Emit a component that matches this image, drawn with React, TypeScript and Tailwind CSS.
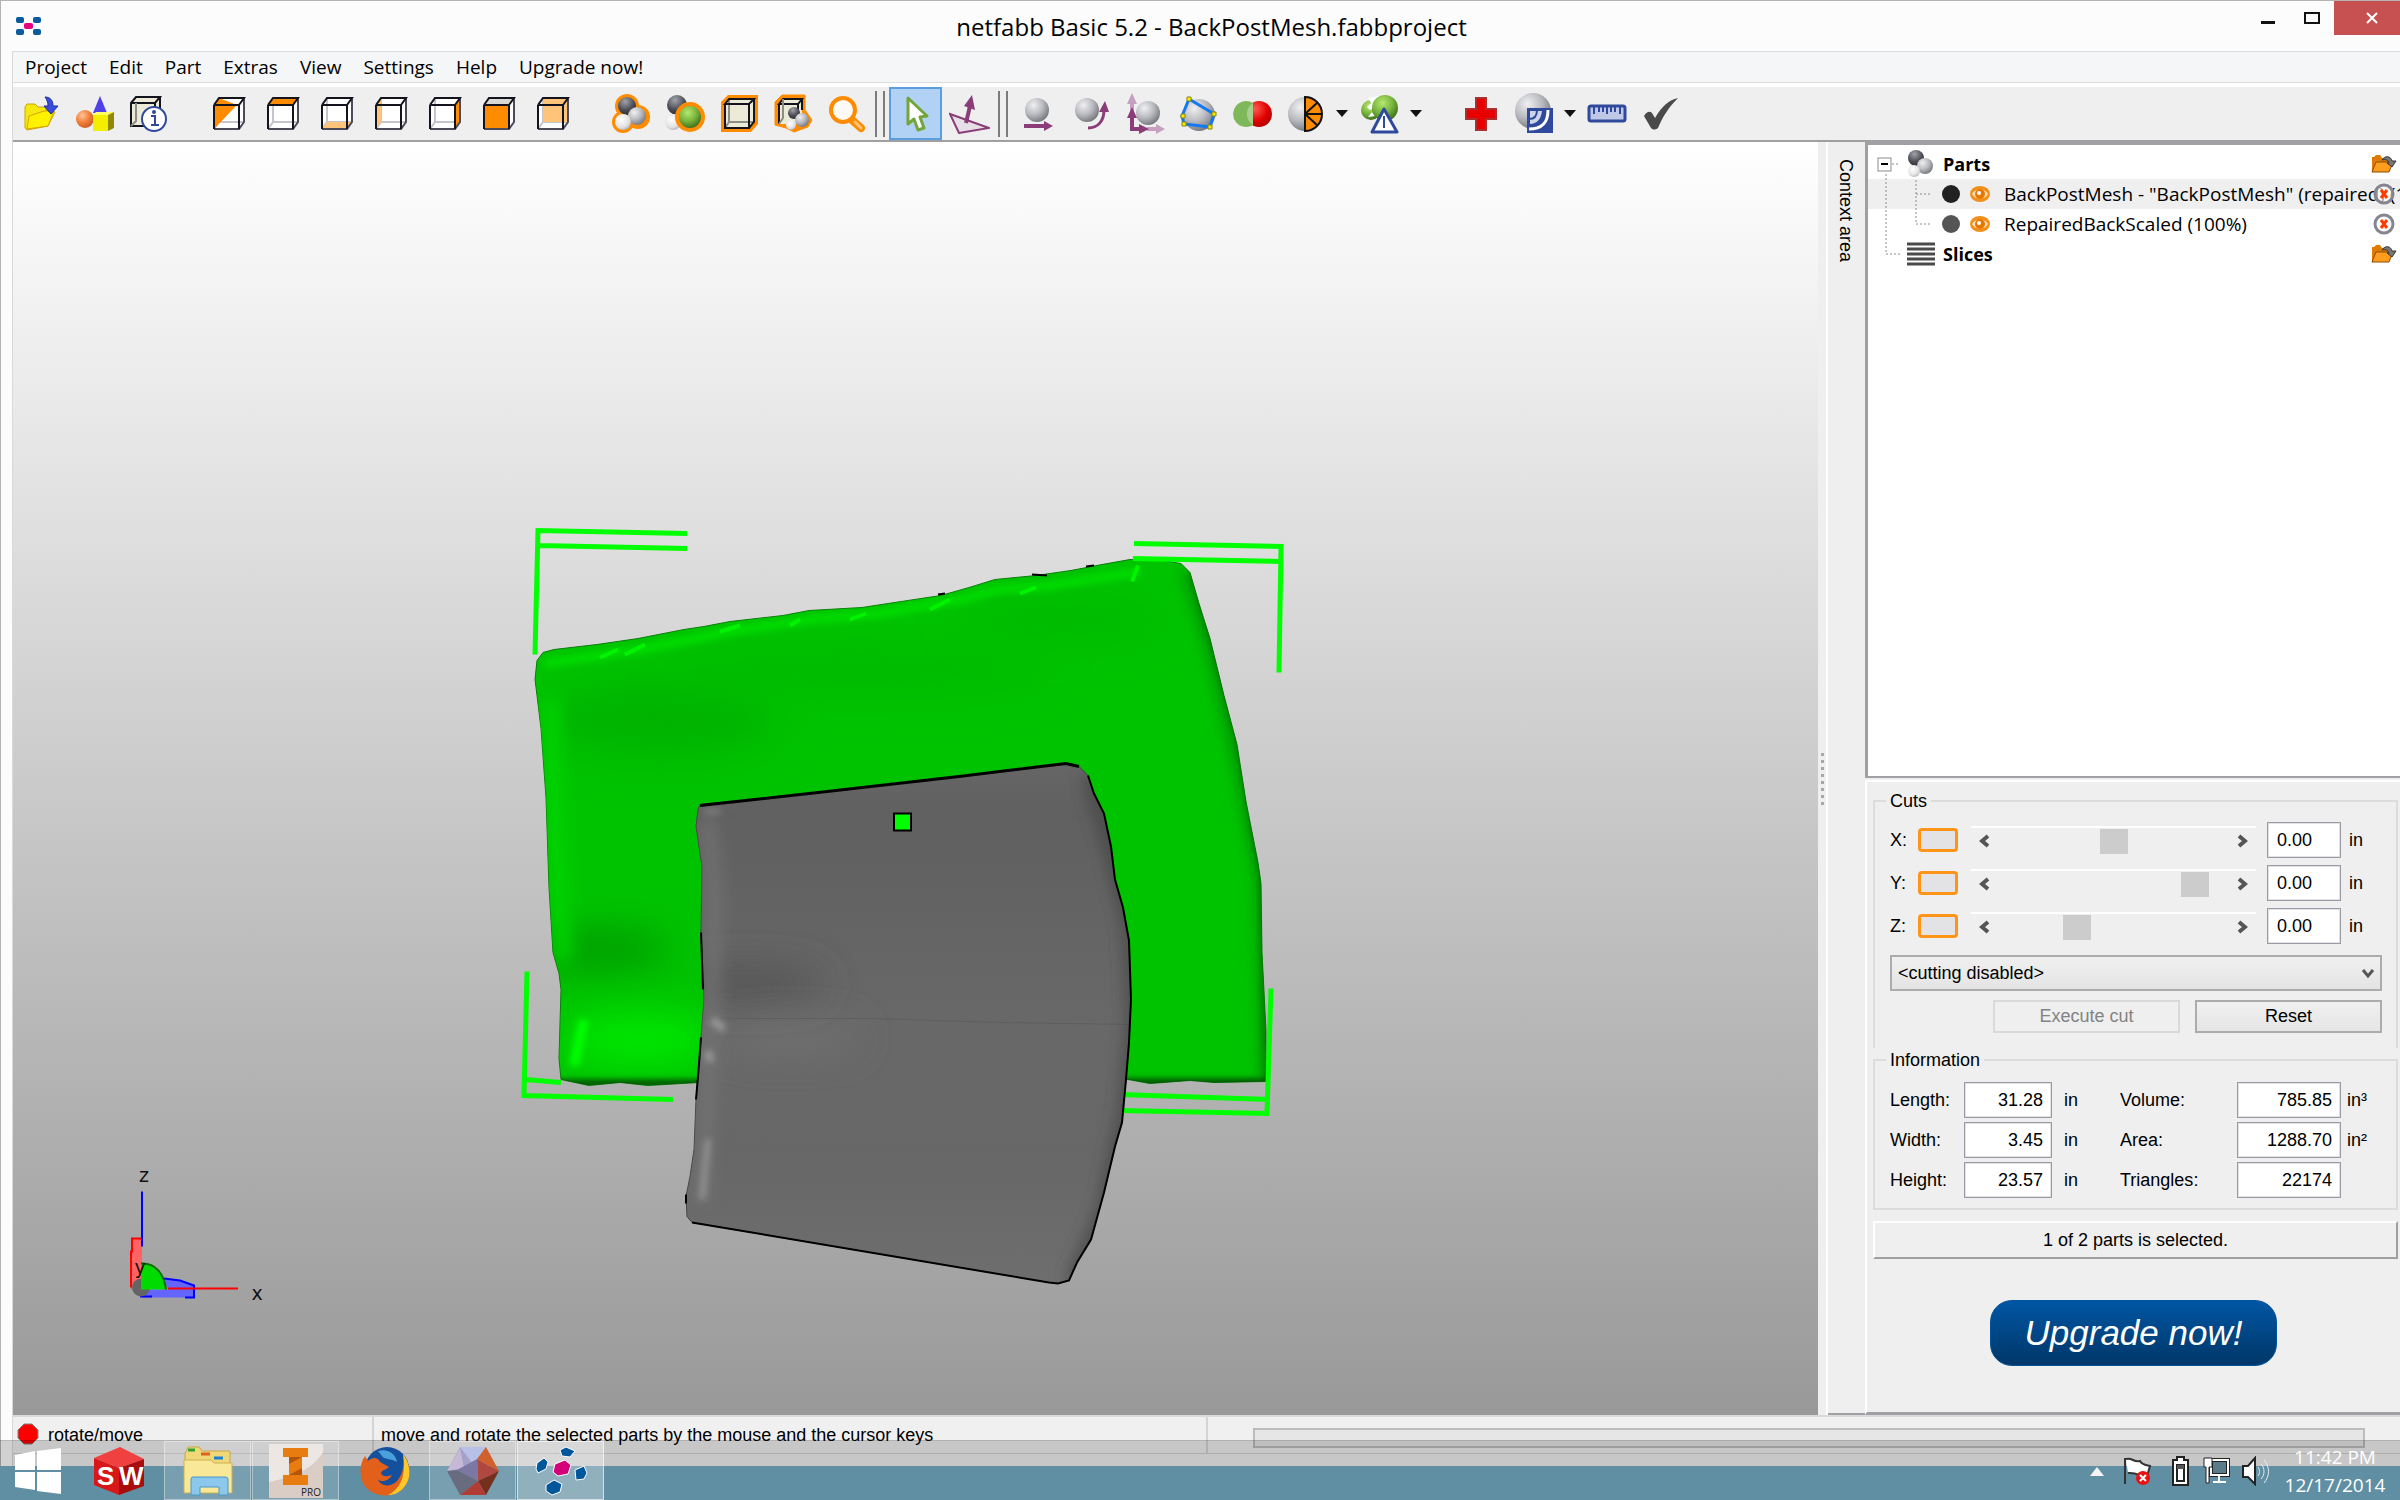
import React from 'react';

const menuItems = ['Project', 'Edit', 'Part', 'Extras', 'View', 'Settings', 'Help', 'Upgrade now!'];

const ORANGE = '#ff8c00';
const PURPLE = '#8a3d78';

/* Shared gradients for the ball icons */
const Gradients = () => (
  <svg className="absolute size-0" aria-hidden="true">
    <defs>
      <radialGradient id="ballGray" cx="0.35" cy="0.3" r="0.8">
        <stop offset="0" stopColor="#f0f0f2" />
        <stop offset="0.5" stopColor="#b9babf" />
        <stop offset="1" stopColor="#6a6b70" />
      </radialGradient>
      <radialGradient id="ballDark" cx="0.4" cy="0.25" r="0.8">
        <stop offset="0" stopColor="#a3a4aa" />
        <stop offset="0.6" stopColor="#4b4c55" />
        <stop offset="1" stopColor="#2a2a30" />
      </radialGradient>
      <radialGradient id="ballWhite" cx="0.4" cy="0.35" r="0.8">
        <stop offset="0" stopColor="#ffffff" />
        <stop offset="0.6" stopColor="#e2e2e4" />
        <stop offset="1" stopColor="#9a9aa0" />
      </radialGradient>
      <radialGradient id="ballGreen" cx="0.4" cy="0.3" r="0.8">
        <stop offset="0" stopColor="#b5e870" />
        <stop offset="0.5" stopColor="#78b43c" />
        <stop offset="1" stopColor="#2e5c14" />
      </radialGradient>
      <radialGradient id="ballOrange" cx="0.35" cy="0.3" r="0.8">
        <stop offset="0" stopColor="#ffc49a" />
        <stop offset="0.5" stopColor="#f27e3a" />
        <stop offset="1" stopColor="#c2561a" />
      </radialGradient>
      <radialGradient id="ballRed" cx="0.35" cy="0.3" r="0.8">
        <stop offset="0" stopColor="#ff5a50" />
        <stop offset="0.6" stopColor="#e00000" />
        <stop offset="1" stopColor="#a80000" />
      </radialGradient>
    </defs>
  </svg>
);

type IconProps = { w?: number; h?: number; children: React.ReactNode };

const Icon = ({ w = 40, h = 40, children }: IconProps) => (
  <svg width={w} height={h} viewBox={`0 0 ${w} ${h}`} aria-hidden="true" className="shrink-0">
    {children}
  </svg>
);

const cubeFaces: Record<string, React.ReactNode> = {
  iso: (
    <>
      <path d="M1 8H24L1 32Z" fill={ORANGE} />
      <path d="M6 1L24 8H1Z" fill={ORANGE} />
    </>
  ),
  top: <path d="M1 8L6 1H31L26 8Z" fill={ORANGE} />,
  bottom: <path d="M1 32L6 25H31L26 32Z" fill="#ffc37a" />,
  left: <path d="M1 8L6 1V25L1 32Z" fill="#ffc37a" />,
  right: <path d="M26 8L31 1V25L26 32Z" fill={ORANGE} />,
  front: <path d="M1 8H26V32H1Z" fill={ORANGE} />,
  back: <path d="M6 1H31V25H6Z" fill="#ffc37a" />,
};

const Cube = ({ face }: { face: string }) => (
  <Icon w={33} h={34}>
    <path d="M1 8L6 1H31V25L26 32H1Z" fill="#fff" />
    {face !== 'front' && <path d="M6 1V25H31M6 25L1 32" fill="none" stroke="#c4c4cc" strokeWidth="2" />}
    {cubeFaces[face]}
    {face === 'front' && <path d="M1 8L6 1H31L26 8Z" fill="#d9d8d4" />}
    <path d="M31 1V25L26 32H1" fill="none" stroke="#4a4a58" strokeWidth="2" />
    <path d="M1 8L6 1H31L26 8V32M1 8V32M1 8H26" fill="none" stroke="#14141e" strokeWidth="2" />
  </Icon>
);

const Caret = ({ label }: { label: string }) => (
  <button type="button" aria-label={label} className="flex h-full w-5 items-center justify-center">
    <Icon w={12} h={7}>
      <path d="M0 0H12L6 7Z" fill="#111" />
    </Icon>
  </button>
);

const ToolButton = ({ label, wide, children }: { label: string; wide?: boolean; children: React.ReactNode }) => (
  <button
    type="button"
    aria-label={label}
    className={`flex h-full shrink-0 items-center justify-center ${wide ? 'w-[54px]' : 'w-[53px]'}`}
  >
    {children}
  </button>
);

const Separator = () => (
  <div className="flex h-[46px] shrink-0 gap-[6px]">
    <div className="w-[2px] bg-[#7c7c7c]" />
    <div className="w-[2px] bg-[#7c7c7c]" />
  </div>
);

const ThreeBalls = ({ outline }: { outline?: boolean }) => (
  <>
    {outline && (
      <g fill={ORANGE}>
        <circle cx="15" cy="12" r="12" />
        <circle cx="26" cy="23" r="12" />
        <circle cx="11" cy="28" r="11" />
      </g>
    )}
    <circle cx="15" cy="12" r="9" fill="url(#ballDark)" />
    <circle cx="25" cy="22" r="9" fill="url(#ballGray)" />
    <circle cx="11" cy="28" r="8" fill="url(#ballWhite)" />
  </>
);

const Toolbar = () => (
  <div role="toolbar" className="flex h-[53px] items-center overflow-hidden bg-[#efefef]">
    <div className="ml-px flex h-full items-center">
      <ToolButton label="Open project" wide>
        <Icon w={35} h={36}>
          <path d="M1 11L3 8H11L14 11H22V14L31 16L24 30L3 34L1 32Z" fill="#f6e80c" stroke="#c9a700" />
          <path d="M3 33L5 20L20 15L30 15L24 30Z" fill="#fff200" stroke="#d9a400" />
          <path d="M21 1C26 1 29 4 29 10H34L27 18L20 10H24C24 6 23 4 21 1Z" fill="#3a4be0" stroke="#1e2c9c" />
        </Icon>
      </ToolButton>
      <ToolButton label="Add primitive" wide>
        <Icon w={39} h={38}>
          <path d="M24 1L31 18H17Z" fill="#5040e8" />
          <circle cx="9" cy="24" r="9" fill="url(#ballOrange)" />
          <path d="M17 20L20 17H38L33 20Z" fill="#ffff66" />
          <path d="M17 20H32V36H17Z" fill="#f4ee00" />
          <path d="M32 20L38 17V33L32 36Z" fill="#8f8a00" />
        </Icon>
      </ToolButton>
      <ToolButton label="Part information" wide>
        <Icon w={38} h={38}>
          <path d="M1 8L6 2H30V30H1Z" fill="#ecebd8" />
          <path d="M1 8L6 2H30L25 8ZM1 8V31H14M25 8V14M30 2V14" fill="none" stroke="#14141e" strokeWidth="2" />
          <path d="M6 8V26L1 31" fill="none" stroke="#8d8d86" strokeWidth="2" />
          <circle cx="24" cy="24" r="12" fill="#fff" stroke="#2f4a9c" strokeWidth="2" />
          <path d="M21 21H25V30M21 30H29" fill="none" stroke="#2f4a9c" strokeWidth="2" />
          <circle cx="24" cy="17" r="2" fill="#2f4a9c" />
        </Icon>
      </ToolButton>
    </div>

    <div className="ml-[26px] flex h-full items-center">
      {Object.keys(cubeFaces).map((face) => (
        <ToolButton key={face} label={`View ${face}`} wide>
          <Cube face={face} />
        </ToolButton>
      ))}
    </div>

    <div className="ml-6 flex h-full items-center">
      <ToolButton label="Zoom to all parts" wide>
        <Icon w={39} h={39}>
          <ThreeBalls outline />
        </Icon>
      </ToolButton>
      <ToolButton label="Zoom to selected part" wide>
        <Icon w={41} h={39}>
          <circle cx="12" cy="11" r="10" fill="url(#ballDark)" />
          <circle cx="8" cy="28" r="8" fill="url(#ballWhite)" />
          <circle cx="25" cy="23" r="15" fill={ORANGE} />
          <circle cx="25" cy="23" r="11" fill="url(#ballGreen)" />
        </Icon>
      </ToolButton>
      <ToolButton label="Zoom to platform" wide>
        <Icon w={39} h={39}>
          <path d="M1 8L8 1H38V30L31 38H1Z" fill={ORANGE} />
          <path d="M5 10L9 5H34V29L29 34H5Z" fill="#ecebd8" />
          <path d="M9 5V28H34M9 28L5 34" fill="none" stroke="#8d8d86" strokeWidth="2" />
          <path d="M5 10L9 5H34L29 10ZM5 10V34H29V10M29 34L34 28V5" fill="none" stroke="#14141e" strokeWidth="2" />
        </Icon>
      </ToolButton>
      <ToolButton label="Zoom to platform and parts" wide>
        <Icon w={39} h={39}>
          <path d="M1 8L8 1H31V16L38 26L34 33L20 38L12 34L1 31Z" fill={ORANGE} stroke={ORANGE} />
          <path d="M5 10L9 5H28V26L24 30H5Z" fill="#ecebd8" />
          <path d="M5 10L9 5H28L24 10ZM5 10V30M24 10V18M28 5V16" fill="none" stroke="#14141e" strokeWidth="2" />
          <path d="M9 5V24L5 30" fill="none" stroke="#8d8d86" strokeWidth="2" />
          <circle cx="20" cy="19" r="6" fill="url(#ballDark)" />
          <circle cx="28" cy="26" r="7" fill="url(#ballGray)" />
          <circle cx="17" cy="31" r="5" fill="url(#ballWhite)" />
        </Icon>
      </ToolButton>
      <ToolButton label="Zoom" wide>
        <Icon w={38} h={39}>
          <path d="M24 26L33 34" stroke={ORANGE} strokeWidth="8" strokeLinecap="round" />
          <path d="M27 28L33 34" stroke="#ffc37a" strokeWidth="3" strokeLinecap="round" />
          <circle cx="15" cy="16" r="12" fill="#fdfaf5" stroke={ORANGE} strokeWidth="4" />
        </Icon>
      </ToolButton>
    </div>

    <div className="mx-px">
      <Separator />
    </div>

    <div className="ml-[3px] flex h-full items-center">
      <button
        type="button"
        aria-label="Select parts"
        aria-pressed="true"
        className="flex h-full w-[53px] items-center justify-center border-2 border-[#5b9ee0] bg-[#b1d2f4] pl-[2px]"
      >
        <Icon w={24} h={38}>
          <path d="M3 3V29L9 24L13 35L19 33L15 22L22 21Z" fill="#fff" stroke="#74a53c" strokeWidth="3" strokeLinejoin="round" />
        </Icon>
      </button>
      <ToolButton label="Align to bottom plane" wide>
        <Icon w={41} h={40}>
          <path d="M1 20L40 34L10 39Z" fill="#e6dfe6" stroke={PURPLE} strokeWidth="2" />
          <path d="M17 29L21 12" stroke={PURPLE} strokeWidth="4" />
          <path d="M23 1L26 16L15 12Z" fill={PURPLE} />
        </Icon>
      </ToolButton>
    </div>

    <div className="ml-[2px]">
      <Separator />
    </div>

    <div className="ml-1 flex h-full items-center">
      <ToolButton label="Move part">
        <Icon w={29} h={34}>
          <circle cx="13" cy="13" r="12" fill="url(#ballGray)" />
          <path d="M0 29H22" stroke={PURPLE} strokeWidth="4" />
          <path d="M20 24L29 29L20 34Z" fill={PURPLE} />
        </Icon>
      </ToolButton>
      <ToolButton label="Rotate part" wide>
        <Icon w={34} h={34}>
          <circle cx="12" cy="13" r="12" fill="url(#ballGray)" />
          <path d="M13 31C23 31 29 24 29 13" fill="none" stroke={PURPLE} strokeWidth="3" />
          <path d="M24 15L30 4L34 15Z" fill={PURPLE} />
        </Icon>
      </ToolButton>
      <ToolButton label="Scale part">
        <Icon w={38} h={42}>
          <circle cx="21" cy="20" r="12" fill="url(#ballGray)" />
          <path d="M5 20V8M20 36H31" stroke="#c6a0c0" strokeWidth="4" />
          <path d="M0 11L5 0L10 11ZM29 31L38 36L29 41Z" fill="#c6a0c0" />
          <path d="M5 24V36H14" fill="none" stroke={PURPLE} strokeWidth="4" />
          <path d="M0 25L5 14L10 25ZM12 31L22 36L12 41Z" fill={PURPLE} />
        </Icon>
      </ToolButton>
      <ToolButton label="Free cut">
        <Icon w={37} h={38}>
          <circle cx="19" cy="20" r="16" fill="url(#ballGray)" />
          <path d="M9 4L34 19L30 32L4 29L2 21Z" fill="none" stroke="#1478f0" strokeWidth="3" />
          <g fill="#f6ee00" stroke="#8a8400">
            <path d="M7 2H11V6H7ZM32 17H36V21H32ZM28 30H32V34H28ZM2 27H6V31H2ZM1 19H5V23H1Z" />
          </g>
        </Icon>
      </ToolButton>
      <ToolButton label="Boolean operation" wide>
        <Icon w={39} h={28}>
          <circle cx="26" cy="14" r="13" fill="url(#ballRed)" />
          <path d="M20 3A13 13 0 1 0 20 25Z" fill="#7fb85a" />
          <path d="M20 3A13 13 0 0 0 20 25Z" fill="#a9cf90" />
        </Icon>
      </ToolButton>
      <ToolButton label="Triangle reduction">
        <Icon w={37} h={38}>
          <circle cx="18" cy="19" r="17" fill="url(#ballGray)" />
          <path d="M18 2A17 17 0 0 1 18 36Z" fill={ORANGE} />
          <path d="M18 2A17 17 0 0 1 18 36V2ZM18 19L31 7M18 19H35M18 19L31 31" fill="none" stroke="#111" strokeWidth="2" />
          <path d="M18 1V37" stroke="#111" strokeWidth="2" />
        </Icon>
      </ToolButton>
      <Caret label="More mesh tools" />
    </div>

    <div className="flex h-full items-center">
      <ToolButton label="Standard analysis" wide>
        <Icon w={39} h={40}>
          <circle cx="11" cy="16" r="10" fill="url(#ballGreen)" />
          <path d="M8 4L19 2L13 9L16 13L10 16L15 22L8 23L12 18L7 13L11 9Z" fill="#fff" />
          <circle cx="25" cy="14" r="13" fill="url(#ballGreen)" />
          <path d="M24 15L37 38H12Z" fill="#fff" stroke="#2f4a9c" strokeWidth="3" strokeLinejoin="round" />
          <path d="M24 22V34" stroke="#2f4a9c" strokeWidth="2" />
        </Icon>
      </ToolButton>
      <Caret label="More analysis tools" />
    </div>

    <div className="ml-7 flex h-full items-center">
      <ToolButton label="Repair part">
        <Icon w={34} h={36}>
          <path d="M12 2H22V13H32V23H22V34H12V23H2V13H12Z" fill="#e80000" stroke="#a83030" strokeWidth="2" />
        </Icon>
      </ToolButton>
      <ToolButton label="Slice part">
        <Icon w={40} h={41}>
          <circle cx="19" cy="18" r="18" fill="url(#ballGray)" />
          <path d="M13 15H39V40H13Z" fill="#2f4a9c" />
          <path d="M16 18H28C27 26 23 31 16 31Z" fill="#cdd4ec" />
          <path d="M34 17C34 30 28 36 15 36" fill="none" stroke="#fff" strokeWidth="3" />
          <path d="M23 17C23 24 20 26 15 26" fill="none" stroke="#2f4a9c" strokeWidth="2" />
        </Icon>
      </ToolButton>
      <Caret label="More slice tools" />
      <ToolButton label="Measure" wide>
        <Icon w={40} h={19}>
          <rect x="2" y="2" width="36" height="15" rx="2" fill="#bfc8e6" stroke="#2f4a9c" strokeWidth="3" />
          <path d="M7 3V10M12 3V8M16 3V8M20 3V10M24 3V8M28 3V8M33 3V10" stroke="#2f4a9c" strokeWidth="2" />
        </Icon>
      </ToolButton>
      <ToolButton label="Apply" wide>
        <Icon w={36} h={34}>
          <path d="M1 19C4 14 7 14 9 16L12 21C19 9 26 3 35 1C26 10 20 19 15 31C12 33 10 33 8 31Z" fill="#4a4a4a" />
        </Icon>
      </ToolButton>
    </div>
  </div>
);

const GREEN_PART =
  'M535 680L537 661L543 653L554 650L597 645L638 639L684 630L704 627L730 622L783 616L809 611L862 608L888 604L941 596L969 588L995 580L1036 576L1071 571L1102 565L1130 560L1163 561L1181 564L1190 573L1199 604L1210 639L1224 696L1237 745L1246 802L1258 863L1261 884L1262 953L1266 1031V1082L1214 1083L1190 1081L1150 1084L1128 1080L699 1083L648 1086L620 1083L589 1086L561 1080L559 1059L561 990L559 974L553 953L549 888L546 798L541 729L537 696Z';
const GRAY_EDGE =
  'M1088 776L1094 794L1104 814L1111 847L1115 880L1123 908L1129 941L1131 1000L1129 1043L1126 1080L1122 1123L1115 1147L1104 1193L1091 1240L1077 1263L1069 1281L1058 1284L1049 1283L692 1223';
const GRAY_PART = `${GRAY_EDGE}L687 1217L686 1197L690 1177L694 1150L696 1100L698 1077L701 1038L704 1000L701 933L702 867L696 827L698 810L700 805L827 792L959 777L1066 764L1079 767Z`;

const Viewport = () => (
  <div className="relative min-w-0 flex-1 bg-linear-to-b from-white to-[#999999]">
    <svg className="absolute inset-0 h-full w-full" viewBox="13 143 1805 1272" role="img" aria-label="3D view">
      <defs>
        <clipPath id="greenClip">
          <path d={GREEN_PART} />
        </clipPath>
        <clipPath id="grayClip">
          <path d={GRAY_PART} />
        </clipPath>
        <linearGradient id="grayFill" x1="0" y1="0" x2="0" y2="1">
          <stop offset="0" stopColor="#666666" />
          <stop offset="0.1" stopColor="#606060" />
          <stop offset="0.5" stopColor="#686868" />
          <stop offset="0.75" stopColor="#676767" />
          <stop offset="1" stopColor="#6e6e6e" />
        </linearGradient>
        <filter id="soft3" filterUnits="userSpaceOnUse" x="500" y="500" width="800" height="820">
          <feGaussianBlur stdDeviation="3" />
        </filter>
        <filter id="soft8" filterUnits="userSpaceOnUse" x="500" y="500" width="800" height="820">
          <feGaussianBlur stdDeviation="8" />
        </filter>
        <filter id="soft20" filterUnits="userSpaceOnUse" x="500" y="500" width="800" height="820">
          <feGaussianBlur stdDeviation="20" />
        </filter>
      </defs>

      {/* selected part */}
      <path d={GREEN_PART} fill="#00c300" stroke="#0a7c0a" strokeWidth="1" />
      <g clipPath="url(#greenClip)">
        <ellipse cx="660" cy="720" rx="120" ry="40" fill="#00b400" filter="url(#soft20)" />
        <ellipse cx="860" cy="670" rx="190" ry="26" fill="#00ba00" filter="url(#soft20)" />
        <ellipse cx="1060" cy="620" rx="100" ry="20" fill="#00b800" filter="url(#soft20)" />
        <ellipse cx="600" cy="950" rx="70" ry="18" fill="#009600" filter="url(#soft20)" />
        <ellipse cx="640" cy="1040" rx="80" ry="26" fill="#00e800" filter="url(#soft20)" />
        <path d="M550 700L554 800L560 900L564 960" fill="none" stroke="#00d400" strokeWidth="16" filter="url(#soft8)" />
        <path d="M545 664L640 650L730 632L810 620L880 614L960 600L1000 590L1050 586L1140 572" fill="none" stroke="#00dc00" strokeWidth="9" filter="url(#soft3)" />
        <path d="M600 658L618 650M625 655L645 645M720 632L740 626M790 626L800 620M850 620L866 614M930 610L950 600M1020 594L1036 588M1132 582L1138 566" stroke="#00f400" strokeWidth="4" />
        <path d="M584 1020L574 1066" stroke="#00ff00" strokeWidth="10" filter="url(#soft3)" />
        <path d="M1188 570L1212 645L1240 760L1263 880L1268 1082" fill="none" stroke="#008e00" strokeWidth="12" filter="url(#soft8)" />
        <path d="M1192 573L1212 640L1238 740L1262 880L1267 1082" fill="none" stroke="#006400" strokeWidth="4" filter="url(#soft3)" />
        <path d="M555 1084H710M1120 1083H1270" stroke="#004000" strokeWidth="7" filter="url(#soft3)" />
      </g>
      <path d="M1032 575L1047 576M938 595L945 594M1086 567L1094 566" stroke="#000" strokeWidth="2" />

      {/* bounding box corners */}
      <g fill="none" stroke="#00ff00" strokeWidth="5">
        <path d="M687 534L538 531L535 655M538 546L687 549" />
        <path d="M1134 544L1281 547L1279 673M1133 559L1281 562" />
        <path d="M527 972L524 1096L673 1100M525 1080L561 1083" />
        <path d="M1271 989L1267 1114L1120 1111M1120 1095L1270 1100" />
      </g>

      {/* unselected part */}
      <path d={GRAY_PART} fill="url(#grayFill)" stroke="#444" strokeWidth="1" />
      <g clipPath="url(#grayClip)">
        <ellipse cx="745" cy="985" rx="80" ry="14" fill="#505050" filter="url(#soft20)" />
        <ellipse cx="790" cy="1038" rx="70" ry="10" fill="#767676" filter="url(#soft20)" />
        <path d="M702 1019L870 1019L1000 1023L1131 1025" fill="none" stroke="#5e5e5e" strokeWidth="1" />
        <path d="M708 820L714 900L712 1000L708 1100L702 1200" fill="none" stroke="#757575" strokeWidth="12" filter="url(#soft8)" />
        <path d="M704 812L720 812" stroke="#7c7c7c" strokeWidth="6" filter="url(#soft3)" />
        <path d="M712 1020L724 1030M707 1052L711 1062" stroke="#989898" strokeWidth="8" filter="url(#soft3)" />
        <path d="M708 1140L702 1200" stroke="#929292" strokeWidth="6" filter="url(#soft3)" />
        <path d="M1088 776L1108 840L1130 930L1134 1020L1126 1110L1104 1210L1072 1284" fill="none" stroke="#444444" strokeWidth="12" filter="url(#soft8)" />
      </g>
      <path d="M700 806L827 792L959 777L1066 764L1079 767" fill="none" stroke="#000" strokeWidth="3" />
      <path d={GRAY_EDGE} fill="none" stroke="#000" strokeWidth="2" />
      <path d="M701 933L703 990M701 1038L698 1077L696 1100M686 1195V1204" fill="none" stroke="#000" strokeWidth="2" />
      <rect x="894" y="814" width="17" height="17" fill="#00ff00" stroke="#000" strokeWidth="2" />

      {/* orientation axes */}
      <path d="M132 1239H142V1290H131V1252H132Z" fill="#ff6464" />
      <path d="M142 1239H132V1252H131V1288" fill="none" stroke="#ff0000" strokeWidth="2" />
      <path d="M164 1279L180 1281L194 1286V1298H142V1290H168Z" fill="#6464ff" />
      <path d="M164 1279L180 1281L194 1286V1298H185M140 1297H152" fill="none" stroke="#0000ff" strokeWidth="2" />
      <circle cx="141" cy="1288" r="9" fill="#646464" />
      <path d="M141 1264C155 1263 164 1274 166 1290H141Z" fill="#00dc00" />
      <path d="M141 1264C155 1263 164 1274 166 1290" fill="none" stroke="#006e00" strokeWidth="2" />
      <path d="M142 1192V1247" stroke="#0000ff" strokeWidth="2" />
      <path d="M168 1289H238" stroke="#ff0000" strokeWidth="2" />
      <g fontFamily="'DejaVu Sans', sans-serif" fontSize="19" textAnchor="middle" fill="#111">
        <text x="144" y="1182">z</text>
        <text x="257" y="1300">x</text>
        <text x="140" y="1274">y</text>
      </g>
    </svg>
  </div>
);

const FolderIcon = () => (
  <Icon w={26} h={20}>
    <path d="M1 18V3H3L5 1H9L11 4H17V18Z" fill="#e07b00" />
    <path d="M5 8H22L18 18H1Z" fill="#ff9d1e" stroke="#8a4b00" />
    <path d="M11 6C14 1 20 2 21 7H25L21 13L16 9H18C17 6 15 5 11 6Z" fill="#777" stroke="#333" />
  </Icon>
);

const RemoveIcon = () => (
  <Icon w={22} h={22}>
    <circle cx="11" cy="11" r="9" fill="#fff" fillOpacity="0.6" stroke="#85858f" strokeWidth="3" />
    <path d="M8 7L14 15M14 7L8 15" stroke="#ff3c00" strokeWidth="3" />
  </Icon>
);

const EyeIcon = () => (
  <Icon w={21} h={18}>
    <ellipse cx="10" cy="9" rx="10" ry="8" fill="#f0901c" />
    <path d="M2 9C5 3 15 3 18 9C15 15 5 15 2 9Z" fill="#fbe0bc" />
    <circle cx="10" cy="9" r="5" fill="#e67800" />
    <circle cx="9" cy="8" r="2" fill="#fff" />
  </Icon>
);

type TreeLeafProps = { color: string; name: string; selected?: boolean };

const TreeLeaf = ({ color, name, selected }: TreeLeafProps) => (
  <li className={`flex h-[30px] items-center pl-[73px] ${selected ? 'bg-[#efefef]' : ''}`}>
    <Icon w={20} h={20}>
      <circle cx="10" cy="10" r="9" fill={color} />
    </Icon>
    <button type="button" aria-label={`Toggle ${name}`} className="ml-[9px]">
      <EyeIcon />
    </button>
    <span className="ml-[13px] w-0 flex-1 whitespace-nowrap">{name}</span>
    <button type="button" aria-label={`Remove ${name}`} className="relative mr-[5px]">
      <RemoveIcon />
    </button>
  </li>
);

const PartsTree = () => (
  <div className="relative min-h-0 flex-1 overflow-hidden border-t-[3px] border-b-2 border-l-[3px] border-[#a0a0a4] bg-white pt-1 font-['Open_Sans','Noto_Sans',sans-serif] text-[19px]">
    <ul>
      <li className="flex h-[30px] items-center pr-[3px] pl-[9px] font-bold">
        <button type="button" aria-label="Collapse Parts">
          <Icon w={15} h={15}>
            <rect x="1" y="1" width="13" height="13" fill="#fff" stroke="#8c8c8c" strokeWidth="1" />
            <path d="M4 7H11" stroke="#000" strokeWidth="2" />
          </Icon>
        </button>
        <span className="ml-[15px]">
          <Icon w={28} h={28}>
            <circle cx="9" cy="8" r="8" fill="url(#ballDark)" />
            <circle cx="18" cy="16" r="8" fill="url(#ballGray)" />
            <circle cx="7" cy="21" r="6" fill="url(#ballWhite)" />
          </Icon>
        </span>
        <span className="ml-2 flex-1 text-[18px]">Parts</span>
        <button type="button" aria-label="Open part">
          <FolderIcon />
        </button>
      </li>
      <TreeLeaf color="#222222" name={'BackPostMesh - "BackPostMesh" (repaired) (1'} selected />
      <TreeLeaf color="#555555" name="RepairedBackScaled (100%)" />
      <li className="flex h-[30px] items-center pr-[3px] pl-[39px] font-bold">
        <Icon w={28} h={24}>
          <path d="M0 2H28M0 7H28M0 12H28M0 17H28M0 22H28" stroke="#4a4a4a" strokeWidth="3" />
        </Icon>
        <span className="ml-2 flex-1 text-[18px]">Slices</span>
        <button type="button" aria-label="Open slices">
          <FolderIcon />
        </button>
      </li>
    </ul>
    {/* connector lines */}
    <svg className="pointer-events-none absolute top-0 left-0" width="64" height="120" aria-hidden="true">
      <path d="M18 29V109H32M24 19H32M48 35V79H62M48 49H62" fill="none" stroke="#8c8c8c" strokeWidth="1" strokeDasharray="2 2" />
    </svg>
  </div>
);

const Chevron = ({ d }: { d: string }) => (
  <Icon w={12} h={14}>
    <path d={d} fill="none" stroke="#555" strokeWidth="4" />
  </Icon>
);

const CutRow = ({ axis, value }: { axis: string; value: number }) => (
  <div className="flex h-9 items-center">
    <label htmlFor={`cut-${axis}`} className="w-7">
      {axis}:
    </label>
    <button
      type="button"
      aria-label={`Show ${axis} cut`}
      className="h-6 w-10 shrink-0 rounded-[4px] border-[3px] border-[#ff9518] bg-[#e3e3e6]"
    />
    <div className="ml-[13px] flex h-[28px] min-w-0 flex-1 items-center justify-between border-t-2 border-white px-2">
      <button type="button" aria-label={`Decrease ${axis}`}>
        <Chevron d="M9 2L3 7L9 12" />
      </button>
      <input
        type="range"
        aria-label={`${axis} position`}
        min={0}
        max={100}
        defaultValue={value}
        className="mx-[7px] h-[25px] min-w-0 flex-1 appearance-none bg-transparent [&::-webkit-slider-thumb]:h-[25px] [&::-webkit-slider-thumb]:w-[28px] [&::-webkit-slider-thumb]:appearance-none [&::-webkit-slider-thumb]:bg-[#cccccc]"
      />
      <button type="button" aria-label={`Increase ${axis}`}>
        <Chevron d="M3 2L9 7L3 12" />
      </button>
    </div>
    <input
      id={`cut-${axis}`}
      type="text"
      defaultValue="0.00"
      className="ml-[11px] h-9 w-[74px] border border-[#9a9aa2] bg-white px-[9px] shadow-[inset_0_0_0_1px_#e2e2e6]"
    />
    <span className="w-[41px] pl-2">in</span>
  </div>
);

const Field = ({ id, label, value, unit, wide }: { id: string; label: string; value: string; unit: React.ReactNode; wide?: boolean }) => (
  <div className="flex h-9 items-center">
    <label htmlFor={id} className={wide ? 'w-[117px]' : 'w-[74px]'}>
      {label}:
    </label>
    <input
      id={id}
      type="text"
      readOnly
      value={value}
      className={`h-9 border border-[#9a9aa2] bg-white px-2 text-right shadow-[inset_0_0_0_1px_#e2e2e6] ${wide ? 'w-[104px]' : 'w-[88px]'}`}
    />
    <span className={wide ? 'pl-[6px]' : 'pl-3'}>{unit}</span>
  </div>
);

const legendClass = '-ml-1 px-1 leading-[22px]';

const ControlPanel = () => (
  <div className="mt-[2px] flex flex-col border-t-2 border-b-[3px] border-l-2 border-t-white border-b-[#a0a0a4] border-l-white pr-[2px] pb-[46px] pl-[6px] pt-2 text-[18px]">
    <fieldset className="border-2 border-b-0 border-[#dcdcdc] pr-[14px] pb-[15px] pl-[15px]">
      <legend className={legendClass}>Cuts</legend>
      <div className="flex flex-col gap-[7px] pt-[10px]">
        <CutRow axis="X" value={50} />
        <CutRow axis="Y" value={90} />
        <CutRow axis="Z" value={32} />
      </div>
      <div className="relative mt-[11px]">
        <select
          aria-label="Cutting mode"
          className="h-9 w-full appearance-none border-2 border-[#acacac] bg-linear-to-b from-[#f0f0f0] to-[#e4e4e4] px-[6px]"
        >
          <option>&lt;cutting disabled&gt;</option>
        </select>
        <span className="pointer-events-none absolute top-[13px] right-[7px]">
          <Icon w={14} h={12}>
            <path d="M2 2L7 8L12 2" fill="none" stroke="#555" strokeWidth="3" />
          </Icon>
        </span>
      </div>
      <div className="mt-[9px] flex justify-end gap-[15px]">
        <button type="button" disabled className="h-[33px] w-[187px] border-2 border-[#d9d9d9] text-[#838383]">
          Execute cut
        </button>
        <button type="button" className="h-[33px] w-[187px] border-2 border-[#acacac] bg-linear-to-b from-[#f0f0f0] to-[#e5e5e5]">
          Reset
        </button>
      </div>
    </fieldset>

    <fieldset className="mt-px border-2 border-[#dcdcdc] pr-[14px] pb-[10px] pl-[15px]">
      <legend className={legendClass}>Information</legend>
      <div className="grid grid-cols-[230px_1fr] gap-y-1 pt-[11px]">
        <Field id="length" label="Length" value="31.28" unit="in" />
        <Field id="volume" label="Volume" value="785.85" unit="in³" wide />
        <Field id="width" label="Width" value="3.45" unit="in" />
        <Field id="area" label="Area" value="1288.70" unit="in²" wide />
        <Field id="height" label="Height" value="23.57" unit="in" />
        <Field id="triangles" label="Triangles" value="22174" unit="" wide />
      </div>
    </fieldset>

    <p className="mt-[11px] flex h-[38px] items-center justify-center border-2 border-t-white border-r-[#a0a0a0] border-b-[#a0a0a0] border-l-white">
      1 of 2 parts is selected.
    </p>
    <button
      type="button"
      className="mt-[41px] mr-1 h-[66px] w-[287px] self-center rounded-[22px] border border-[#00549c] bg-linear-to-b from-[#0056a4] to-[#003768] font-['Liberation_Sans',Arial,sans-serif] text-[35px] text-white italic"
    >
      Upgrade now!
    </button>
  </div>
);

const StatusBar = () => (
  <footer className="flex h-[38px] shrink-0 border-t-2 border-[#dadada] bg-[#f0f0f0] text-[18px]">
    <div className="flex w-[361px] items-start border-r-2 border-[#d4d4d4] pt-[6px]">
      <span className="ml-1">
        <Icon w={22} h={22}>
          <path d="M7 1H15L21 7V15L15 21H7L1 15V7Z" fill="#ff0000" stroke="#808080" />
        </Icon>
      </span>
      <span className="ml-[9px] leading-6">rotate/move</span>
    </div>
    <div className="w-[834px] border-r-2 border-[#d4d4d4] pt-[6px] pl-[7px] leading-6">
      move and rotate the selected parts by the mouse and the cursor keys
    </div>
    <div className="flex-1 pt-[11px] pr-[35px] pl-[45px]">
      <div role="progressbar" aria-label="Progress" className="h-5 border-2 border-[#bcbcbc] bg-[#e6e6e6]" />
    </div>
  </footer>
);

const taskButton = 'flex h-[59px] w-[87px] items-center justify-center';

const Taskbar = () => (
  <nav className="absolute inset-x-0 bottom-0 flex h-[60px] items-start border-t border-black/10 bg-black/17">
    <button type="button" aria-label="Start" className="flex h-[59px] w-[75px] items-center justify-center">
      <Icon w={46} h={48}>
        <path d="M0 8L20 4V23H0ZM22 4L46 1V23H22ZM0 25H20V43L0 40ZM22 25H46V47L22 44Z" fill="#fff" />
      </Icon>
    </button>
    <button type="button" aria-label="SolidWorks" className={taskButton}>
      <Icon w={52} h={50}>
        <path d="M1 12L27 1L51 13L26 22Z" fill="#f04040" />
        <path d="M1 12L26 22V49L1 39Z" fill="#d81818" />
        <path d="M26 22L51 13V40L26 49Z" fill="#a80c0c" />
        <g fontFamily="'Liberation Sans', Arial, sans-serif" fontWeight="bold" fontSize="26" fill="#fff">
          <text x="4" y="39">S</text>
          <text x="26" y="39">W</text>
        </g>
      </Icon>
    </button>
    <button type="button" aria-label="File Explorer" className={`${taskButton} ml-[2px] border border-white/40 bg-white/15`}>
      <Icon w={50} h={52}>
        <path d="M2 9L5 2H16L19 6H47V30H2Z" fill="#f0d878" stroke="#c8a848" />
        <path d="M5 5H12" stroke="#30a030" strokeWidth="3" />
        <path d="M18 9H27" stroke="#e06020" strokeWidth="3" />
        <path d="M31 13H40" stroke="#2080d0" strokeWidth="3" />
        <path d="M1 15H28L31 18H49V48H1Z" fill="#f8e898" stroke="#d0b050" />
        <path d="M8 50V34Q8 32 10 32H42Q45 32 45 34V50H36V42H17V50Z" fill="#8cc8ec" stroke="#4a98c8" />
      </Icon>
    </button>
    <button type="button" aria-label="Inventor Pro" className={`${taskButton} ml-px border border-white/40 bg-white/15`}>
      <Icon w={54} h={54}>
        <rect width="54" height="54" fill="#ece7e3" />
        <path d="M0 38C20 34 44 26 54 8V54H0Z" fill="#d9cdc6" />
        <path d="M14 4H39V13H33V31H39V41H14V31H20V13H14Z" fill="#e87c10" />
        <path d="M20 13H33L20 20ZM20 31H33V24Z" fill="#b4560a" />
        <text x="52" y="52" textAnchor="end" fontFamily="'Open Sans', sans-serif" fontSize="10" fill="#222">
          PRO
        </text>
      </Icon>
    </button>
    <button type="button" aria-label="Firefox" className={`${taskButton} ml-[2px]`}>
      <Icon w={50} h={50}>
        <circle cx="27" cy="23" r="22" fill="#14509c" />
        <path d="M18 5C28 2 36 8 37 16C31 12 24 14 22 10Z" fill="#4aa0dc" />
        <path d="M43 8C52 20 52 36 40 45C28 53 10 50 3 37C-1 28 0 17 5 10L8 15C12 11 18 11 20 16L29 21C26 24 22 24 21 27C23 32 28 30 32 29C27 38 16 36 17 30C18 40 29 42 36 36C43 29 45 18 43 8Z" fill="#e2601a" />
        <path d="M43 8C52 20 52 36 40 45C36 48 32 49 28 49C42 42 46 28 43 8Z" fill="#fcc82c" />
      </Icon>
    </button>
    <button type="button" aria-label="Mesh viewer" className={`${taskButton} ml-px border border-white/40 bg-white/15`}>
      <Icon w={54} h={50}>
        <path d="M14 1L40 1L31 23Z" fill="#b8c0e8" />
        <path d="M14 1L31 23L1 25Z" fill="#a4a0c8" />
        <path d="M1 25L18 22L14 2Z" fill="#c8b8d8" />
        <path d="M40 1L53 25L31 13Z" fill="#d0602c" />
        <path d="M31 13L53 25L32 35Z" fill="#b04840" />
        <path d="M31 13L32 35L11 24Z" fill="#7c78a4" />
        <path d="M1 25L11 24L32 35L14 49Z" fill="#686c80" />
        <path d="M32 35L53 25L40 49Z" fill="#74301c" />
        <path d="M14 49L32 35L40 49Z" fill="#b03c34" />
      </Icon>
    </button>
    <button type="button" aria-label="netfabb Basic" className={`${taskButton} ml-px border border-white/60 bg-white/30`}>
      <Icon w={54} h={50}>
        <g stroke="#fff" strokeWidth="1">
          <path d="M26 4L32 1L41 5L36 11L28 10Z" fill="#00579c" />
          <path d="M3 17L10 12L14 16L12 23L4 27L2 23Z" fill="#00579c" />
          <path d="M21 18L31 14L37 19L34 28L24 30L19 26Z" fill="#d4007a" />
          <path d="M41 24L50 20L53 27L50 33L42 34Z" fill="#00579c" />
          <path d="M12 39L20 34L28 38L26 46L18 49L12 45Z" fill="#00579c" />
        </g>
      </Icon>
    </button>

    <div className="flex-1" />

    <div className="flex h-full items-center pt-px">
      <Icon w={14} h={9}>
        <path d="M7 0L14 9H0Z" fill="#f4f4f4" />
      </Icon>
      <span className="ml-[18px]">
        <Icon w={30} h={30}>
          <path d="M3 2V28M4 3C10 1 12 7 18 5C20 9 24 9 28 10L25 20C20 22 16 16 6 17" fill="#fff" stroke="#333" strokeWidth="2" />
          <circle cx="21" cy="22" r="7" fill="#e81010" />
          <path d="M18 19L24 25M24 19L18 25" stroke="#fff" strokeWidth="2" />
        </Icon>
      </span>
      <span className="ml-5">
        <Icon w={17} h={30}>
          <path d="M5 1H12V4H16V29H1V4H5Z" fill="#fff" stroke="#222" strokeWidth="2" />
          <path d="M5 9H12V25H5Z" fill="#fff" stroke="#222" strokeWidth="2" />
          <path d="M5 9H12V13H5Z" fill="#555" />
        </Icon>
      </span>
      <span className="ml-[14px]">
        <Icon w={27} h={28}>
          <path d="M8 3H25V18H8Z" fill="#5a7c8a" stroke="#222" strokeWidth="4" />
          <path d="M8 3H25V18H8ZM16 19V25M10 25H23" fill="none" stroke="#fff" strokeWidth="2" />
          <path d="M1 1H9V10H6V26H3V10H1Z" fill="#fff" stroke="#222" />
        </Icon>
      </span>
      <span className="ml-3">
        <Icon w={28} h={30}>
          <path d="M1 10H6L13 2V28L6 21H1Z" fill="#fff" stroke="#222" strokeWidth="2" />
          <path d="M16 11C18 14 18 17 16 20M19 8C23 12 23 19 19 23M22 4C28 11 28 20 22 27" fill="none" stroke="#e6eef2" strokeWidth="1" />
        </Icon>
      </span>
      <div className="flex w-[130px] flex-col items-center font-['Open_Sans','Noto_Sans',sans-serif] text-[19px] leading-7 text-white">
        <span>11:42 PM</span>
        <span>12/17/2014</span>
      </div>
    </div>
  </nav>
);

const TitleBar = () => (
  <header className="flex h-[51px] shrink-0 items-start border-t border-[#b4b4b4] bg-[#fcfcfc]">
    <div className="flex w-[132px] items-start pt-4 pl-[15px]">
      <Icon w={25} h={18}>
        <g fill="#0a5aa0">
          <rect x="0" y="0" width="8" height="6" rx="2" />
          <rect x="17" y="0" width="8" height="6" rx="2" />
          <rect x="0" y="12" width="8" height="6" rx="2" />
          <rect x="17" y="12" width="8" height="6" rx="2" />
        </g>
        <rect x="8" y="6" width="9" height="6" rx="2" fill="#e6007e" />
      </Icon>
    </div>
    <h1 className="flex-1 pt-[10px] pl-11 text-center font-['Open_Sans','Noto_Sans',sans-serif] text-[24px] leading-8 text-black">
      netfabb Basic 5.2 - BackPostMesh.fabbproject
    </h1>
    <div className="flex h-[34px]">
      <button type="button" aria-label="Minimize" className="flex w-11 items-center justify-center pt-2">
        <Icon w={14} h={3}>
          <path d="M0 0H14V3H0Z" fill="#111" />
        </Icon>
      </button>
      <button type="button" aria-label="Maximize" className="flex w-[44px] items-center justify-center">
        <Icon w={16} h={12}>
          <path d="M1 1H15V11H1Z" fill="none" stroke="#111" strokeWidth="2" />
        </Icon>
      </button>
      <button type="button" aria-label="Close" className="flex w-[66px] items-center justify-center bg-[#c75050] pl-[10px]">
        <Icon w={12} h={12}>
          <path d="M1 1L11 11M11 1L1 11" stroke="#fff" strokeWidth="2" />
        </Icon>
      </button>
    </div>
  </header>
);

const App: React.FC = () => {
  return (
    <div className="relative h-screen overflow-hidden bg-[#74acc4] pb-[34px] font-['Liberation_Sans',Arial,sans-serif] text-black">
      <Gradients />
      <div className="flex h-full flex-col border-l border-[#b4b4b4] bg-[#fcfcfc]">
        <TitleBar />
        <div className="ml-[11px] flex min-h-0 flex-1 flex-col border-l border-[#d9d9d9]">
          <nav className="flex h-[32px] shrink-0 items-center gap-[22px] border-t border-b border-[#dcdcdc] bg-[#f5f6f7] pl-3 font-['Open_Sans','Noto_Sans',sans-serif] text-[19px]">
            {menuItems.map((item) => (
              <button key={item} type="button">
                {item}
              </button>
            ))}
          </nav>
          <div className="shrink-0 border-b-2 border-[#a0a0a0] bg-white pt-1">
            <Toolbar />
          </div>

          <main className="flex min-h-0 flex-1 bg-[#efefef]">
            <Viewport />
            <div className="flex w-[10px] shrink-0 flex-col items-center justify-center gap-[4px] border-r-2 border-white">
              {Array.from({ length: 8 }, (_, i) => (
                <div key={i} className="size-[3px] bg-[#a8a8a8]" />
              ))}
            </div>
            <div className="w-[37px] shrink-0 border-b-2 border-[#a0a0a4] pt-[17px]">
              <div className="pl-[6px] text-[18px] leading-6 [writing-mode:vertical-rl]">Context area</div>
            </div>
            <aside className="flex w-[535px] shrink-0 flex-col">
              <PartsTree />
              <ControlPanel />
            </aside>
          </main>

          <StatusBar />
          <div className="h-[13px] shrink-0 border-t border-[#d0d0d0] bg-[#f0f0f0]" />
        </div>
      </div>
      <Taskbar />
    </div>
  );
};

export default App;
